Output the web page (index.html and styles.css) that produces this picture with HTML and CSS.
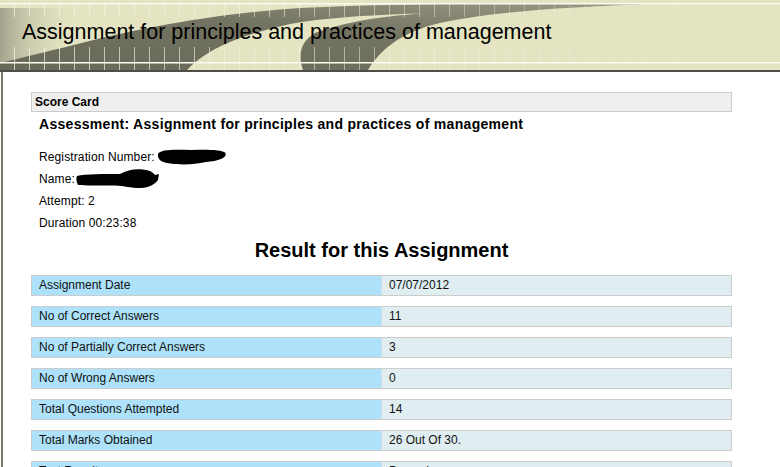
FILE: index.html
```html
<!DOCTYPE html>
<html>
<head>
<meta charset="utf-8">
<title>Assignment for principles and practices of management</title>
<link rel="stylesheet" href="styles.css">
</head>
<body>
<div class="page">
  <header class="banner">
    <svg class="banner-art" viewBox="0 0 780 70" width="780" height="70" aria-hidden="true">
      <defs>
        <linearGradient id="leftGlow" x1="0" y1="0" x2="1" y2="0">
          <stop offset="0" stop-color="#a4a48e"/>
          <stop offset="1" stop-color="#e4e4c2" stop-opacity="0"/>
        </linearGradient>
        <linearGradient id="swoosh" x1="0" y1="1" x2="1" y2="0">
          <stop offset="0" stop-color="#686858"/>
          <stop offset="0.55" stop-color="#747463"/>
          <stop offset="1" stop-color="#9c9c86"/>
        </linearGradient>
        <linearGradient id="fade" x1="0" y1="0" x2="1" y2="0">
          <stop offset="0" stop-color="#fff" stop-opacity="1"/>
          <stop offset="0.55" stop-color="#fff" stop-opacity="0.6"/>
          <stop offset="0.9" stop-color="#fff" stop-opacity="0"/>
        </linearGradient>
        <mask id="gridMask">
          <rect x="0" y="0" width="780" height="70" fill="url(#fade)"/>
        </mask>
        <pattern id="grid" x="14" y="0" width="15" height="70" patternUnits="userSpaceOnUse">
          <rect x="0" y="0" width="1" height="70" fill="#f4f4e4" opacity="0.75"/>
        </pattern>
      </defs>
      <rect x="0" y="0" width="780" height="70" fill="#e4e4c2"/>
      <rect x="0" y="8" width="80" height="62" fill="url(#leftGlow)"/>
      <path fill="url(#swoosh)" d="M0,70 L0,63 C25,57 45,52 70,46 C130,30 210,14 300,8 C400,3 520,3 650,4 C560,7 480,13 432,25 C400,34 380,50 368,70 L303,70 C298,55 300,42 315,33 C345,22 380,16 430,13 C370,15 320,18 290,24 C240,35 205,50 187,70 Z"/>
      <g mask="url(#gridMask)">
        <rect x="0" y="4" width="780" height="13" fill="url(#grid)"/>
        <rect x="0" y="47" width="780" height="23" fill="url(#grid)"/>
      </g>
      <rect x="0" y="3" width="780" height="1.5" fill="#fbfbf2"/>
      <rect x="0" y="62" width="780" height="1.5" fill="#fbfbf2"/>
    </svg>
    <h1 class="banner-title">Assignment for principles and practices of management</h1>
  </header>

  <main class="content">
    <section class="scorecard">
      <div class="sc-head">Score Card</div>
      <div class="sc-assessment">Assessment: Assignment for principles and practices of management</div>
      <div class="sc-info">
        <p>Registration Number: <svg class="redact redact-reg" viewBox="0 0 72 18" width="72" height="18" aria-hidden="true"><path d="M2,6 C4,1 20,1.5 35,2 C50,1.5 66,1.5 69.5,5 C71.5,10 62,13 50,14 C40,16 30,17 20,16 C10,15.5 1,14 2,6Z" fill="#000"/></svg></p>
        <p>Name:<svg class="redact redact-name" viewBox="0 0 86 21" width="86" height="21" aria-hidden="true"><path d="M2,8 C10,6 30,6 45,6 C52,2 60,0.5 68,1.5 C74,2 78,4 80,7 L84,6 L83,12 C80,16 74,20 66,20 C55,20 50,18 40,17.5 C25,17.5 10,17.5 3,17 C1,13 1,10 2,8Z" fill="#000"/></svg></p>
        <p>Attempt: 2</p>
        <p>Duration 00:23:38</p>
      </div>
      <h2 class="result-title">Result for this Assignment</h2>
      <div class="result-rows">
        <div class="row"><div class="label">Assignment Date</div><div class="value">07/07/2012</div></div>
        <div class="row"><div class="label">No of Correct Answers</div><div class="value">11</div></div>
        <div class="row"><div class="label">No of Partially Correct Answers</div><div class="value">3</div></div>
        <div class="row"><div class="label">No of Wrong Answers</div><div class="value">0</div></div>
        <div class="row"><div class="label">Total Questions Attempted</div><div class="value">14</div></div>
        <div class="row"><div class="label">Total Marks Obtained</div><div class="value">26 Out Of 30.</div></div>
        <div class="row"><div class="label">Test Result</div><div class="value">Passed</div></div>
      </div>
    </section>
  </main>
</div>
</body>
</html>
```
FILE: styles.css
```css
* { box-sizing: border-box; }

html, body {
  margin: 0;
  padding: 0;
  overflow: hidden;
  background: #ffffff;
}

body {
  font-family: "Liberation Sans", Arial, sans-serif;
  color: #000;
}

.page {
  width: 780px;
  height: 467px;
  overflow: hidden;
}

.banner {
  display: grid;
  height: 72px;
  border-bottom: 2px solid #4f4f48;
}

.banner > * {
  grid-area: 1 / 1;
}

.banner-art {
  display: block;
  width: 780px;
  height: 70px;
}

.banner-title {
  margin: 0;
  align-self: start;
  padding: 20px 0 0 22px;
  font-size: 21.5px;
  line-height: 24px;
  font-weight: normal;
  color: #000;
  white-space: nowrap;
}

.content {
  margin-left: 1px;
  border-left: 2px solid #77776a;
  padding: 20px 0 0 28px;
  min-height: 400px;
}

.scorecard {
  width: 701px;
}

.sc-head {
  height: 20px;
  border: 1px solid #cccccc;
  background: #efefef;
  padding-left: 3px;
  font-size: 12px;
  line-height: 18px;
  font-weight: bold;
}

.sc-assessment {
  margin: 4px 0 0 8px;
  font-size: 14px;
  line-height: 16px;
  font-weight: bold;
  letter-spacing: 0.3px;
  white-space: nowrap;
}

.sc-info {
  margin: 14px 0 0 8px;
  font-size: 12px;
  line-height: 22px;
  letter-spacing: 0.12px;
}

.sc-info p {
  margin: 0;
  height: 22px;
}

.redact {
  display: inline-block;
  vertical-align: -5px;
}

.redact-reg {
  margin-left: -2px;
}

.redact-name {
  margin-left: 0;
  vertical-align: -6px;
}

.result-title {
  margin: 4px 0 0;
  text-align: center;
  font-size: 20px;
  line-height: 24px;
  font-weight: bold;
}

.result-rows {
  margin-top: 13px;
  display: flex;
  flex-direction: column;
  gap: 10px;
}

.row {
  display: grid;
  grid-template-columns: 350px 351px;
  height: 21px;
  font-size: 12px;
  line-height: 19px;
  color: #111;
}

.label {
  background: #ade2fa;
  border: 1px solid #cccccc;
  border-right: none;
  padding-left: 7px;
  white-space: nowrap;
}

.value {
  background: #e0eef2;
  border: 1px solid #cccccc;
  border-left: 1px solid #d3dfe3;
  padding-left: 7px;
  white-space: nowrap;
}
```
